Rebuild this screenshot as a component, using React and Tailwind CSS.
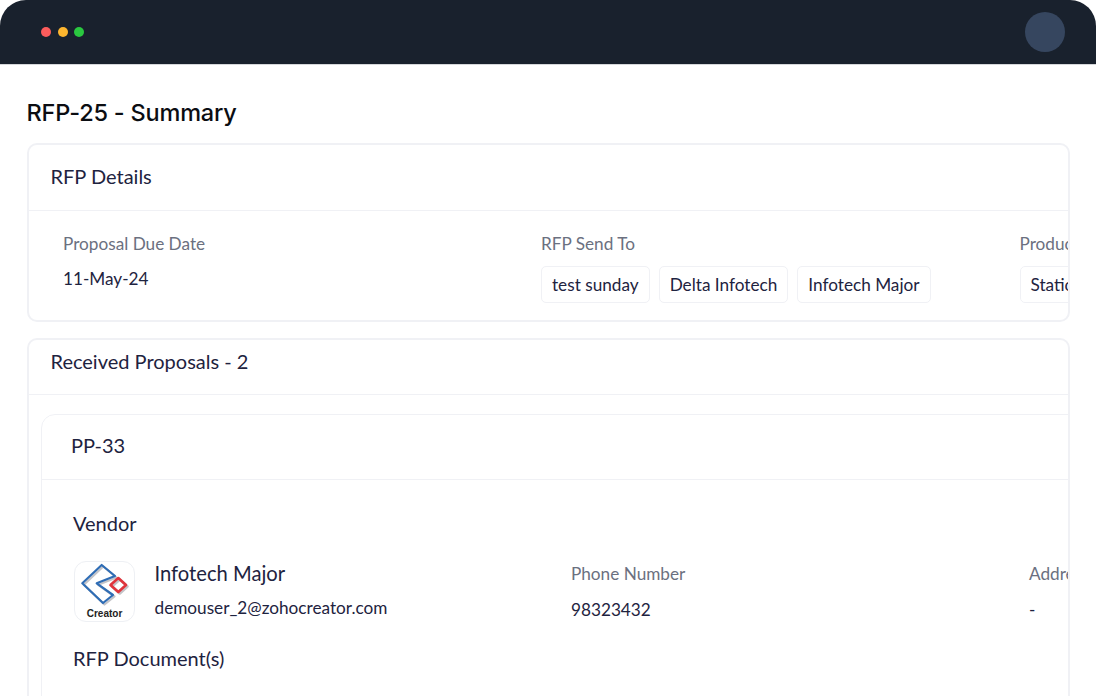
import React from 'react';

const Tag = ({ children }) => (
    <span className="h-[37px] flex items-center px-[10px] border border-[#f0f1f5] rounded-[5px] text-[17.2px] text-[#1e2340] whitespace-nowrap">
        {children}
    </span>
);

const CreatorLogo = () => (
    <div className="w-[61px] h-[61px] ml-[1px] border border-[#eef0f4] rounded-[12px] flex flex-col items-center pt-[1px] shrink-0">
        <svg width="59" height="44" viewBox="0 0 59 44" fill="none">
            <path d="M26.7 2 L7.3 20.3 L28 40 L38 32 L21.7 20.3 L40 13 Z" transform="translate(1.5 1.5)" stroke="#c4c4c8" strokeWidth="2.2" strokeLinejoin="round" />
            <path d="M26.7 2 L7.3 20.3 L28 40 L38 32 L21.7 20.3 L40 13 Z" stroke="#2f6db5" strokeWidth="2.2" strokeLinejoin="round" />
            <path d="M43.3 15 L51 22 L43.3 29 L35.5 22 Z" transform="translate(1.5 1.5)" stroke="#c4c4c8" strokeWidth="2.6" strokeLinejoin="round" />
            <path d="M43.3 15 L51 22 L43.3 29 L35.5 22 Z" stroke="#e0343c" strokeWidth="2.6" strokeLinejoin="round" />
        </svg>
        <span className="text-[10px] leading-[14px] font-bold text-[#222] font-['Liberation_Sans',sans-serif]">Creator</span>
    </div>
);

const App = () => {
    return (
        <div className="w-[1096px] h-[696px] overflow-hidden bg-white font-['Lato',sans-serif]">
            {/* Window bar */}
            <div className="h-[65px] bg-[#19212d] rounded-t-[26px] border-b border-[#d5d7da] flex items-center justify-between pl-[41px] pr-[31px]">
                <div className="flex gap-[6.5px]">
                    <span className="w-[10px] h-[10px] rounded-full bg-[#fc5c5c]" />
                    <span className="w-[10px] h-[10px] rounded-full bg-[#fdb62f]" />
                    <span className="w-[10px] h-[10px] rounded-full bg-[#2ac840]" />
                </div>
                <div className="w-[40px] h-[40px] rounded-full bg-[#36465f]" />
            </div>

            <div className="pl-[26.5px] pr-[26.5px]">
                <h1 className="mt-[33px] h-[30px] leading-[30px] text-[23.5px] font-medium text-[#0b0d12] font-['Inter',sans-serif] tracking-[-0.2px]">
                    RFP-25 - Summary
                </h1>

                {/* RFP details */}
                <section className="mt-[15px] h-[179px] border-2 border-[#f0f1f5] rounded-[10px] overflow-hidden">
                    <div className="h-[66px] flex items-center pl-[22px] pb-[4px] border-b border-[#f0f1f5] text-[20px] text-[#1e2340]">
                        RFP Details
                    </div>
                    <div className="flex pl-[34.5px] pt-[21px]">
                        <div className="w-[478px] shrink-0">
                            <div className="text-[17.2px] leading-[24px] text-[#6b7080]">Proposal Due Date</div>
                            <div className="mt-[11px] text-[17.2px] leading-[24px] text-[#1e2340]">11-May-24</div>
                        </div>
                        <div className="w-[478.5px] shrink-0">
                            <div className="text-[17.2px] leading-[24px] text-[#6b7080]">RFP Send To</div>
                            <div className="mt-[10px] flex gap-[9px]">
                                <Tag>test sunday</Tag>
                                <Tag>Delta Infotech</Tag>
                                <Tag>Infotech Major</Tag>
                            </div>
                        </div>
                        <div className="shrink-0">
                            <div className="text-[17.2px] leading-[24px] text-[#6b7080]">Product</div>
                            <div className="mt-[10px] flex">
                                <Tag>Stationery</Tag>
                            </div>
                        </div>
                    </div>
                </section>

                {/* Received proposals */}
                <section className="mt-[16px] h-[400px] border-2 border-[#f0f1f5] rounded-[10px] overflow-hidden">
                    <div className="h-[55px] flex items-center pl-[22px] pb-[12px] border-b border-[#f0f1f5] text-[20px] text-[#1e2340]">
                        Received Proposals - 2
                    </div>
                    <div className="pl-[12.5px] pt-[19px]">
                        <div className="w-[1100px] h-[400px] border border-[#f0f1f5] rounded-[14px]">
                            <div className="h-[65px] flex items-center pl-[29px] pb-[4px] border-b border-[#f0f1f5] text-[20px] text-[#1e2340]">
                                PP-33
                            </div>
                            <div className="pl-[31px]">
                                <div className="mt-[29px] text-[20px] leading-[28px] text-[#1e2340]">Vendor</div>
                                <div className="mt-[24px] flex">
                                    <CreatorLogo />
                                    <div className="w-[436px] shrink-0 pl-[19.5px] -mt-[2px]">
                                        <div className="text-[20.2px] leading-[28px] text-[#1e2340]">Infotech Major</div>
                                        <div className="mt-[9px] text-[17.2px] leading-[24px] text-[#1e2340]">demouser_2@zohocreator.com</div>
                                    </div>
                                    <div className="w-[458px] shrink-0">
                                        <div className="mt-[1px] text-[17.2px] leading-[24px] text-[#6b7080]">Phone Number</div>
                                        <div className="mt-[12px] text-[17.2px] leading-[24px] text-[#1e2340]">98323432</div>
                                    </div>
                                    <div className="shrink-0">
                                        <div className="mt-[1px] text-[17.2px] leading-[24px] text-[#6b7080]">Address</div>
                                        <div className="mt-[12px] text-[17.2px] leading-[24px] text-[#1e2340]">-</div>
                                    </div>
                                </div>
                                <div className="mt-[22px] text-[20px] leading-[28px] text-[#1e2340]">RFP Document(s)</div>
                            </div>
                        </div>
                    </div>
                </section>
            </div>
        </div>
    );
};

export default App;
